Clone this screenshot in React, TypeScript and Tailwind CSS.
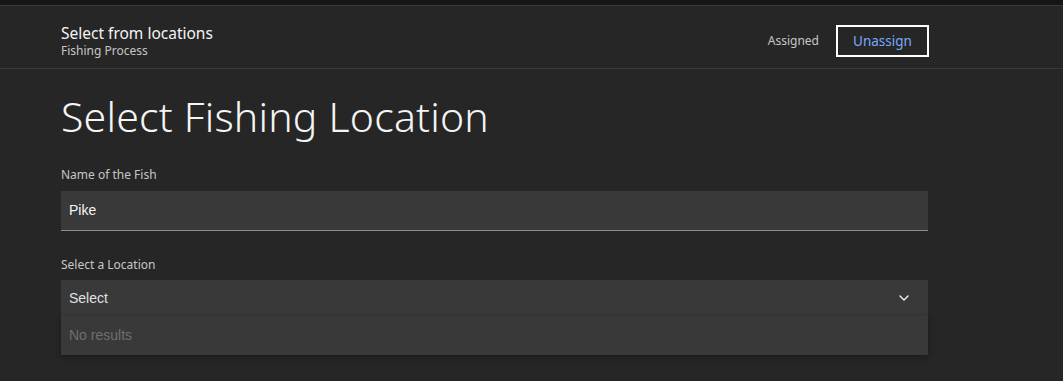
import { ChevronDown } from "lucide-react";

const plex = { fontFamily: '"Noto Sans", "Open Sans", sans-serif' };
const arial = { fontFamily: '"Liberation Sans", Arial, sans-serif' };

const App = () => {
  return (
    <div className="min-h-[381px] w-full bg-[#262626] text-[#f4f4f4]" style={plex}>
      <div className="h-[5px] bg-[#161616]" />
      <header className="flex h-[64px] items-center justify-between border-y border-[#393939] pt-[8px] pl-[61px] pr-[134px]">
        <div className="flex flex-col">
          <span className="text-[15.5px] leading-[20px] text-[#f4f4f4]">Select from locations</span>
          <span className="text-[12px] leading-[16px] text-[#c6c6c6]">Fishing Process</span>
        </div>
        <div className="flex items-center gap-[17px]">
          <span className="text-[12px] text-[#c6c6c6]">Assigned</span>
          <button className="h-[32px] w-[93px] border-2 border-white text-[13.5px] text-[#78a9ff]">
            Unassign
          </button>
        </div>
      </header>

      <main className="flex w-[928px] flex-col pl-[61px]">
        <h1 className="mt-[22px] text-[41px] font-light leading-[50px] tracking-[0.2px] text-[#f4f4f4]">
          Select Fishing Location
        </h1>

        <label className="mt-[26px] text-[12px] leading-[16px] text-[#c6c6c6]">Name of the Fish</label>
        <div className="mt-[8px] flex h-[40px] items-center border-b border-[#8d8d8d] bg-[#393939] px-[8px]">
          <span className="text-[14px] text-[#f4f4f4]" style={arial}>
            Pike
          </span>
        </div>

        <label className="mt-[26px] text-[12px] leading-[16px] text-[#c6c6c6]">Select a Location</label>
        <div className="relative mt-[7px]">
          <div className="flex h-[36px] items-center justify-between bg-[#393939] px-[8px]">
            <span className="text-[14px] text-[#e0e0e0]" style={arial}>
              Select
            </span>
            <ChevronDown size={16} strokeWidth={2} className="mr-[8px] text-[#f4f4f4]" />
          </div>
          <div className="flex h-[39px] items-center bg-[#393939] px-[8px] shadow-[0_2px_6px_rgba(0,0,0,0.3)]">
            <span className="text-[14px] text-[#6f6f6f]" style={arial}>
              No results
            </span>
          </div>
        </div>
      </main>
    </div>
  );
};

export default App;
